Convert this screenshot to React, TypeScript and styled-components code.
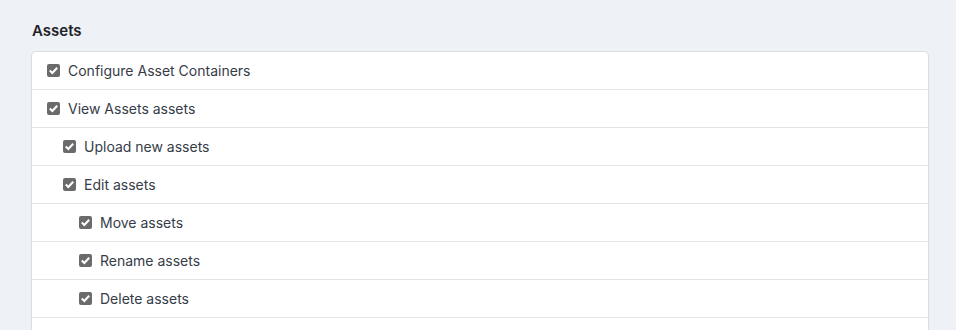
import React from "react";
import styled, { createGlobalStyle } from "styled-components";

const GlobalStyle = createGlobalStyle`
  body {
    margin: 0;
    background: #eef1f6;
    font-family: Inter, "Liberation Sans", sans-serif;
  }
`;

const Page = styled.div`
  padding: 20px 27px 0 31px;
`;

const Heading = styled.h2`
  margin: 0 0 9px 1px;
  font-size: 15px;
  line-height: 22px;
  font-weight: 600;
  color: #1f2329;
`;

const Card = styled.div`
  background: #fff;
  border: 1px solid #dcdde3;
  border-radius: 5px;
  box-shadow: 0 1px 2px rgba(30, 40, 60, 0.06);
  overflow: hidden;
`;

const Row = styled.label<{ $level: number }>`
  display: flex;
  align-items: center;
  gap: 8px;
  height: 37px;
  padding-left: ${(p) => 15 + p.$level * 16}px;
  border-top: 1px solid #e3e4e8;
  font-size: 14px;
  color: #363c47;
  &:first-child {
    border-top: none;
  }
`;

const Box = styled.span`
  width: 13px;
  height: 13px;
  border-radius: 2px;
  background: #6b6b6b;
  display: flex;
  align-items: center;
  justify-content: center;
`;

const Check = () => (
  <Box>
    <svg width="13" height="13" viewBox="0 0 13 13">
      <path d="M2.8 6.6 L5.3 9 L10.2 3.8" fill="none" stroke="#fff" strokeWidth="2.1" />
    </svg>
  </Box>
);

const perms = [
  { label: "Configure Asset Containers", level: 0 },
  { label: "View Assets assets", level: 0 },
  { label: "Upload new assets", level: 1 },
  { label: "Edit assets", level: 1 },
  { label: "Move assets", level: 2 },
  { label: "Rename assets", level: 2 },
  { label: "Delete assets", level: 2 },
  { label: "Edit Asset Folders", level: 0 },
];

export default function App() {
  return (
    <>
      <GlobalStyle />
      <Page>
        <Heading>Assets</Heading>
        <Card>
          {perms.map((p) => (
            <Row key={p.label} $level={p.level}>
              <Check />
              <span>{p.label}</span>
            </Row>
          ))}
        </Card>
      </Page>
    </>
  );
}
